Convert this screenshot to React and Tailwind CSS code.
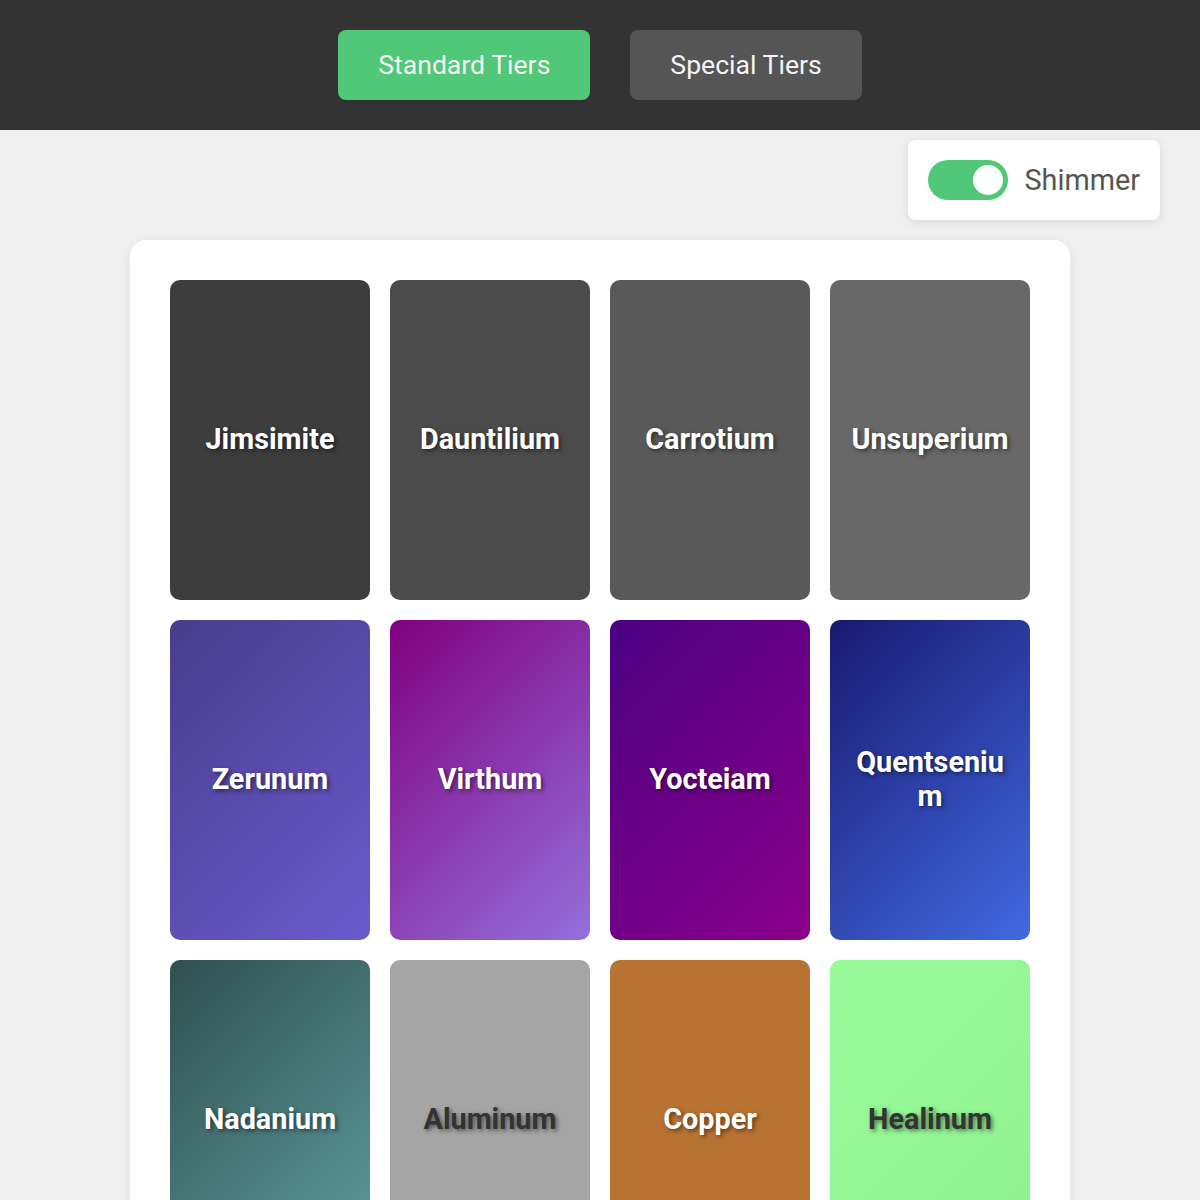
import React, { useState } from "react";

const tiers = [
  { name: "Jimsimite", bg: "bg-[#3d3d3d]", text: "text-white" },
  { name: "Dauntilium", bg: "bg-[#4b4b4b]", text: "text-white" },
  { name: "Carrotium", bg: "bg-[#595959]", text: "text-white" },
  { name: "Unsuperium", bg: "bg-[#686868]", text: "text-white" },
  { name: "Zerunum", bg: "bg-[linear-gradient(135deg,#483d8b,#6a5acd)]", text: "text-white" },
  { name: "Virthum", bg: "bg-[linear-gradient(135deg,#800080,#9370db)]", text: "text-white" },
  { name: "Yocteiam", bg: "bg-[linear-gradient(135deg,#4b0082,#8b008b)]", text: "text-white" },
  { name: "Quentsenium", bg: "bg-[linear-gradient(135deg,#191970,#4169e1)]", text: "text-white" },
  { name: "Nadanium", bg: "bg-[linear-gradient(135deg,#2f4f4f,#5f9ea0)]", text: "text-white" },
  { name: "Aluminum", bg: "bg-[#a5a5a5]", text: "text-[#333333]" },
  { name: "Copper", bg: "bg-[#b87333]", text: "text-white" },
  { name: "Healinum", bg: "bg-[linear-gradient(135deg,#98fb98,#90f090)]", text: "text-[#333333]" },
];

function TierCard({ tier }) {
  return (
    <div
      className={`h-[320px] rounded-[10px] ${tier.bg} flex items-center justify-center p-5`}
    >
      <span
        className={`block w-full text-center break-words font-bold text-[28.8px] leading-[34px] -mt-[2px] ${tier.text} [text-shadow:2px_2px_4px_rgba(0,0,0,0.5)]`}
      >
        {tier.name}
      </span>
    </div>
  );
}

export default function App() {
  const [tab, setTab] = useState("standard");
  const [shimmer, setShimmer] = useState(true);

  return (
    <div className="min-h-[1200px] bg-[#f0f0f0] font-['Roboto',sans-serif]">
      <header className="h-[130px] bg-[#333333] flex items-center justify-center gap-10">
        <button
          onClick={() => setTab("standard")}
          className={`h-[70px] px-10 rounded-lg text-[26.6px] leading-[30px] text-[#f4f4f4] ${
            tab === "standard" ? "bg-[#50c878]" : "bg-[#555555]"
          }`}
        >
          Standard Tiers
        </button>
        <button
          onClick={() => setTab("special")}
          className={`h-[70px] px-10 rounded-lg text-[26.6px] leading-[30px] text-[#f4f4f4] ${
            tab === "special" ? "bg-[#50c878]" : "bg-[#555555]"
          }`}
        >
          Special Tiers
        </button>
      </header>

      <div className="flex justify-end pr-10 pt-[10px]">
        <div className="h-20 bg-white rounded-lg px-5 flex items-center gap-[17px] shadow-[0_2px_10px_rgba(0,0,0,0.1)]">
          <button
            onClick={() => setShimmer(!shimmer)}
            className={`w-20 h-10 rounded-full flex items-center px-[5px] ${
              shimmer ? "bg-[#50c878] justify-end" : "bg-[#cccccc] justify-start"
            }`}
          >
            <span className="w-[30px] h-[30px] rounded-full bg-white" />
          </button>
          <span className="text-[28.8px] leading-[34px] text-[#555555]">Shimmer</span>
        </div>
      </div>

      <main className="w-[940px] mx-auto mt-5 bg-white rounded-2xl p-10 shadow-[0_2px_10px_rgba(0,0,0,0.08)]">
        <div className="grid grid-cols-4 gap-5">
          {tiers.map((t) => (
            <TierCard key={t.name} tier={t} />
          ))}
        </div>
      </main>
    </div>
  );
}
